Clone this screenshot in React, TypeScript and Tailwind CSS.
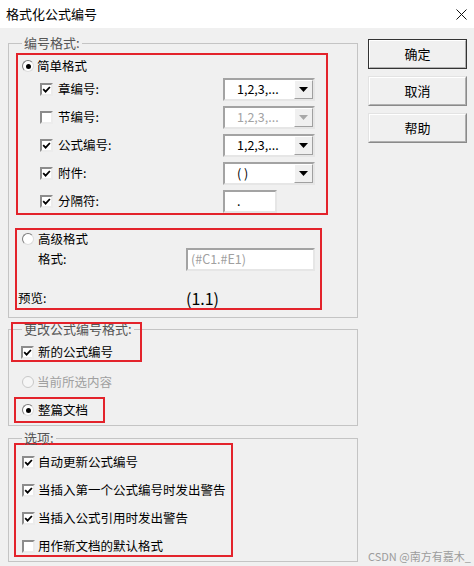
import React from "react";

const RED = "border-[#e3232b]";

function Check({ checked, disabled }: { checked?: boolean; disabled?: boolean }) {
  return (
    <span
      className={`w-[13px] h-[13px] shrink-0 flex items-center justify-center border-2 border-t-[#8c8c8c] border-l-[#8c8c8c] border-r-[#ececec] border-b-[#ececec] ${
        disabled ? "bg-[#f4f4f4]" : "bg-white"
      }`}
    >
      {checked && (
        <svg width="9" height="9" viewBox="0 0 9 9">
          <path d="M1.2 4.2 L3.6 6.6 L7.9 2" stroke="#000" strokeWidth="1.8" fill="none" />
        </svg>
      )}
    </span>
  );
}

function Radio({ checked, disabled }: { checked?: boolean; disabled?: boolean }) {
  return (
    <span
      className={`w-[12px] h-[12px] shrink-0 rounded-full flex items-center justify-center border ${
        disabled
          ? "bg-[#f6f6f6] border-[#c8c8c8]"
          : "bg-white border-t-[#7c7c7c] border-l-[#7c7c7c] border-r-[#dcdcdc] border-b-[#dcdcdc]"
      }`}
    >
      {checked && <span className="w-[5px] h-[5px] rounded-full bg-black" />}
    </span>
  );
}

function Combo({ text, disabled }: { text: string; disabled?: boolean }) {
  return (
    <div className="w-[92px] h-[23px] flex bg-white border-2 border-t-[#a3a3a3] border-l-[#a3a3a3] border-r-[#e6e6e6] border-b-[#e6e6e6]">
      <div
        className={`flex-1 flex items-center pl-[12px] text-[12.5px] ${
          disabled ? "text-[#a3a3a3]" : "text-black"
        }`}
      >
        {text}
      </div>
      <div className="w-[19px] bg-[#f0f0f0] border border-t-white border-l-white border-r-[#a0a0a0] border-b-[#a0a0a0] flex items-center justify-center">
        <svg width="9" height="5" viewBox="0 0 9 5">
          <path d="M0 0 H9 L4.5 5 Z" fill={disabled ? "#a8a8a8" : "#000"} />
        </svg>
      </div>
    </div>
  );
}

function Edit({ text, w, gray }: { text: string; w: string; gray?: boolean }) {
  return (
    <div
      className={`${w} h-[23px] flex items-center bg-white border-2 border-t-[#a3a3a3] border-l-[#a3a3a3] border-r-[#e6e6e6] border-b-[#e6e6e6] text-[12.5px] ${
        gray ? "pl-[3px] text-[#a0a0a0]" : "pl-[12px] text-black"
      }`}
    >
      {text}
    </div>
  );
}

function Button({ label, def }: { label: string; def?: boolean }) {
  return (
    <div
      className={`w-[99px] h-[30px] flex bg-[#f0f0f0] border ${
        def
          ? "border-[#333333]"
          : "border-t-[#e3e3e3] border-l-[#e3e3e3] border-r-[#8a8a8a] border-b-[#8a8a8a]"
      }`}
    >
      <div className="flex-1 border border-t-white border-l-white border-r-[#b0b0b0] border-b-[#b0b0b0] flex items-center justify-center text-[13px]">
        {label}
      </div>
    </div>
  );
}

function Legend({ children }: { children: React.ReactNode }) {
  return (
    <legend className="ml-[13px] px-[2px] text-[13px] leading-[16px] text-[#555555]">
      {children}
    </legend>
  );
}

export default function App() {
  const rows: { label: string; checked: boolean; ctrl: React.ReactNode }[] = [
    { label: "章编号:", checked: true, ctrl: <Combo text="1,2,3,..." /> },
    { label: "节编号:", checked: false, ctrl: <Combo text="1,2,3,..." disabled /> },
    { label: "公式编号:", checked: true, ctrl: <Combo text="1,2,3,..." /> },
    { label: "附件:", checked: true, ctrl: <Combo text="( )" /> },
    { label: "分隔符:", checked: true, ctrl: <Edit text="." w="w-[54px]" /> },
  ];

  const options = [
    { label: "自动更新公式编号", checked: true },
    { label: "当插入第一个公式编号时发出警告", checked: true },
    { label: "当插入公式引用时发出警告", checked: true },
    { label: "用作新文档的默认格式", checked: false },
  ];

  return (
    <div className="w-[474px] h-[566px] bg-[#f0f0f0] flex flex-col overflow-hidden text-black text-[12.5px] font-['Noto_Sans_CJK_SC','Noto_Sans',sans-serif]">
      {/* Title bar */}
      <div className="h-[28px] shrink-0 bg-white flex items-center justify-between pl-[6px] pr-[7px]">
        <span className="text-[13px]">格式化公式编号</span>
        <svg width="11" height="11" viewBox="0 0 11 11">
          <path d="M0.5 0.5 L10.5 10.5 M10.5 0.5 L0.5 10.5" stroke="#111" strokeWidth="1" />
        </svg>
      </div>

      <div className="flex flex-1">
        {/* Left column */}
        <div className="w-[358px] pl-[8px] pt-[7px] flex flex-col">
          {/* Group 1 */}
          <fieldset className="w-[350px] border border-[#c4c4c4] pb-[7px]">
            <Legend>编号格式:</Legend>
            <div className={`mt-[2px] ml-[7px] w-[312px] border-2 ${RED}`}>
              <div className="mt-[1px] h-[20px] flex items-center pl-[4px] gap-[3px]">
                <Radio checked />
                <span>简单格式</span>
              </div>
              <div className="mt-[2px] flex flex-col gap-[5px]">
                {rows.map((r) => (
                  <div key={r.label} className="h-[23px] flex items-center">
                    <div className="w-[205px] pl-[22px] flex items-center gap-[5px]">
                      <Check checked={r.checked} />
                      <span>{r.label}</span>
                    </div>
                    {r.ctrl}
                  </div>
                ))}
              </div>
            </div>

            <div className={`mt-[13px] ml-[6px] w-[307px] border-2 ${RED}`}>
              <div className="h-[18px] flex items-center pl-[5px] gap-[4px]">
                <Radio />
                <span>高级格式</span>
              </div>
              <div className="h-[23px] flex items-center">
                <div className="w-[169px] pl-[21px]">格式:</div>
                <Edit text="(#C1.#E1)" w="w-[129px]" gray />
              </div>
              <div className="mt-[17px] h-[20px] flex items-center">
                <div className="w-[169px] pl-[1px]">预览:</div>
                <span className="text-[16px] font-normal">(1.1)</span>
              </div>
            </div>
          </fieldset>

          {/* Group 2 */}
          <div className="relative mt-[3px]">
            <fieldset className="w-[350px] border border-[#c4c4c4] pb-[2px]">
              <Legend>更改公式编号格式:</Legend>
              <div className="mt-[5px] h-[20px] flex items-center pl-[12px] gap-[4px]">
                <Check checked />
                <span>新的公式编号</span>
              </div>
              <div className="mt-[10px] h-[20px] flex items-center pl-[13px] gap-[3px] text-[#a0a0a0]">
                <Radio disabled />
                <span>当前所选内容</span>
              </div>
              <div className={`mt-[5px] ml-[5px] w-[91px] h-[26px] border-2 ${RED} flex items-center pl-[6px] gap-[4px]`}>
                <Radio checked />
                <span>整篇文档</span>
              </div>
            </fieldset>
            <div className={`absolute left-[3px] top-[1px] w-[131px] h-[40px] border-2 ${RED} pointer-events-none`} />
          </div>

          {/* Group 3 */}
          <fieldset className="mt-[4px] w-[350px] border border-[#c4c4c4] pb-[4px]">
            <Legend>选项:</Legend>
            <div className={`-mt-[3px] ml-[5px] w-[219px] border-2 ${RED} pt-[8px] flex flex-col gap-[10px]`}>
              {options.map((o) => (
                <div key={o.label} className="h-[18px] flex items-center pl-[6px] gap-[3px]">
                  <Check checked={o.checked} />
                  <span>{o.label}</span>
                </div>
              ))}
            </div>
          </fieldset>
        </div>

        {/* Right column */}
        <div className="ml-[10px] w-[99px] pt-[11px] pb-[3px] flex flex-col gap-[7px]">
          <Button label="确定" def />
          <Button label="取消" />
          <Button label="帮助" />
          <div className="mt-auto text-[11px] leading-[14px] text-[#9c9c9c] whitespace-nowrap">
            CSDN @南方有嘉木_
          </div>
        </div>
      </div>
    </div>
  );
}
